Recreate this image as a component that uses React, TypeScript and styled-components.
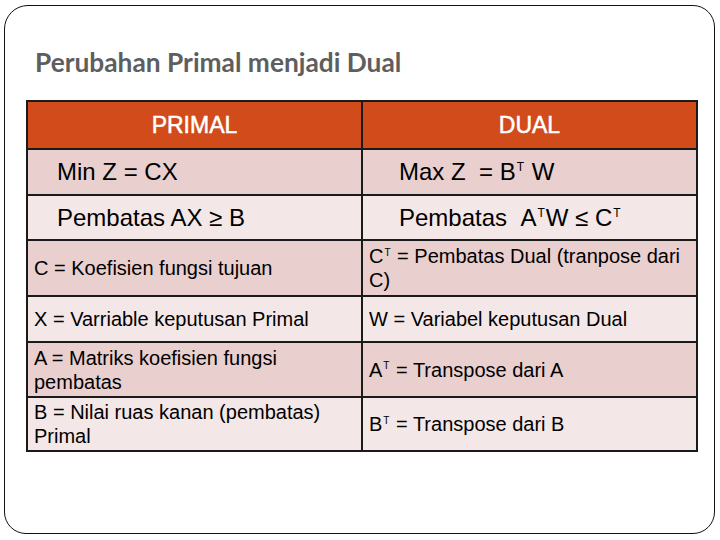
import styled, { createGlobalStyle } from "styled-components";

const GlobalStyle = createGlobalStyle`
  html, body {
    margin: 0;
    padding: 0;
    background: #ffffff;
  }
`;

type Tone = "dark" | "light";

interface Row {
  height: number;
  tone: Tone;
  big?: boolean;
  primal: React.ReactNode;
  dual: React.ReactNode;
}

const T = () => <Sup>T</Sup>;

const rows: Row[] = [
  { height: 46, tone: "dark", big: true, primal: "Min Z = CX", dual: <>Max Z &nbsp;= B<T /> W</> },
  { height: 45, tone: "light", big: true, primal: "Pembatas AX ≥ B", dual: <>Pembatas &nbsp;A<T />W ≤ C<T /></> },
  { height: 56, tone: "dark", primal: "C = Koefisien fungsi tujuan", dual: <>C<T /> = Pembatas Dual (tranpose dari C)</> },
  { height: 46, tone: "light", primal: "X = Varriable keputusan Primal", dual: "W = Variabel keputusan Dual" },
  { height: 55, tone: "dark", primal: "A = Matriks koefisien fungsi pembatas", dual: <>A<T /> = Transpose dari A</> },
  { height: 54, tone: "light", primal: "B = Nilai ruas kanan (pembatas) Primal", dual: <>B<T /> = Transpose dari B</> },
];

const App = () => {
  return (
    <>
      <GlobalStyle />
      <Slide>
        <Title>Perubahan Primal menjadi Dual</Title>
        <Table>
          <colgroup>
            <col style={{ width: 335 }} />
            <col style={{ width: 335 }} />
          </colgroup>
          <thead>
            <tr>
              <HeadCell>PRIMAL</HeadCell>
              <HeadCell>DUAL</HeadCell>
            </tr>
          </thead>
          <tbody>
            {rows.map((row, i) => (
              <BodyRow key={i} $tone={row.tone} $height={row.height}>
                <Cell $big={row.big} $indent={29}>{row.primal}</Cell>
                <Cell $big={row.big} $indent={36}>{row.dual}</Cell>
              </BodyRow>
            ))}
          </tbody>
        </Table>
      </Slide>
    </>
  );
};

export default App;

const Slide = styled.div`
  box-sizing: border-box;
  width: 711px;
  height: 529px;
  margin: 5px 0 0 4px;
  border: 1.5px solid #111;
  border-radius: 24px 22px 22px 22px;
  padding: 36px 0 0 21px;
`;

const Title = styled.h1`
  margin: 0 0 0 9px;
  font-family: Lato, "Open Sans", sans-serif;
  font-weight: 700;
  font-size: 26.3px;
  line-height: 40px;
  color: #5e5e5e;
`;

const Table = styled.table`
  margin-top: 18px;
  width: 670px;
  border-collapse: collapse;
  table-layout: fixed;
  font-family: "Liberation Sans", Arial, sans-serif;
  color: #000;
`;

const HeadCell = styled.th`
  height: 46px;
  padding: 0;
  background: #d14b1b;
  border: 2px solid #1a1a1a;
  color: #ffffff;
  font-size: 23px;
  font-weight: 400;
  text-align: center;
  vertical-align: middle;
  -webkit-text-stroke: 0.5px #fff;
`;

const BodyRow = styled.tr<{ $tone: Tone; $height: number }>`
  height: ${({ $height }) => $height}px;
  background: ${({ $tone }) => ($tone === "dark" ? "#e9cfce" : "#f4e7e7")};
`;

const Cell = styled.td<{ $big?: boolean; $indent: number }>`
  box-sizing: border-box;
  border: 2px solid #1a1a1a;
  padding: 0 6px 0 ${({ $big, $indent }) => ($big ? $indent : 6)}px;
  font-size: ${({ $big }) => ($big ? 24 : 20)}px;
  line-height: ${({ $big }) => ($big ? 28 : 24)}px;
  text-align: left;
  vertical-align: middle;
`;

const Sup = styled.span`
  display: inline-block;
  margin: 0 1px;
  font-size: 0.5em;
  line-height: 1;
  vertical-align: 0.72em;
`;
